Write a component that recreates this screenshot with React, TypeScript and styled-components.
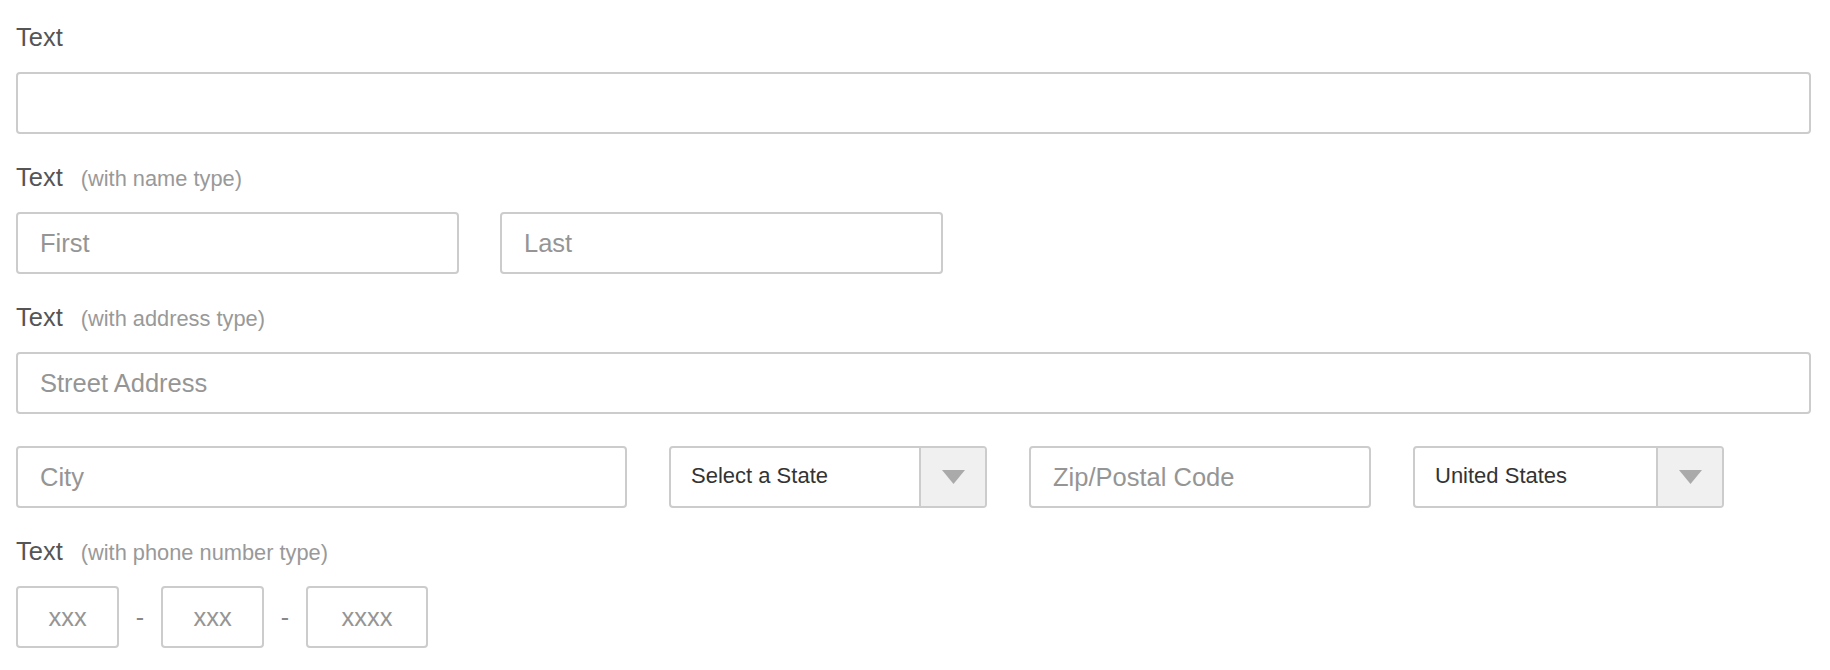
import React from "react";
import styled, { createGlobalStyle } from "styled-components";

const GlobalStyle = createGlobalStyle`
  html, body { margin: 0; padding: 0; background: #fff; }
  body { font-family: "Liberation Sans", Arial, Helvetica, sans-serif; }
  * { box-sizing: border-box; }
`;

const Form = styled.form`
  display: flex;
  flex-direction: column;
  gap: 28px;
  padding: 22px 19px 0 16px;
`;

const Field = styled.div`
  display: flex;
  flex-direction: column;
  gap: 20px;
`;

const LabelRow = styled.div`
  display: flex;
  align-items: baseline;
  gap: 18px;
  height: 30px;
  line-height: 30px;
`;

const MainLabel = styled.label`
  font-size: 25.5px;
  color: #555;
`;

const Hint = styled.span`
  font-size: 21.8px;
  color: #999;
`;

const Stack = styled.div`
  display: flex;
  flex-direction: column;
  gap: 32px;
`;

const Row = styled.div<{ $gap: number }>`
  display: flex;
  align-items: center;
  gap: ${(p) => p.$gap}px;
`;

const TextInput = styled.input<{ $w?: number; $center?: boolean }>`
  height: 62px;
  width: ${(p) => (p.$w ? `${p.$w}px` : "100%")};
  flex: none;
  border: 2px solid #ccc;
  border-radius: 4px;
  padding: 0 ${(p) => (p.$center ? 0 : 22)}px;
  font-family: inherit;
  font-size: 25.5px;
  color: #555;
  background: #fff;
  outline: none;
  text-align: ${(p) => (p.$center ? "center" : "left")};
  &::placeholder {
    color: #959595;
    opacity: 1;
  }
`;

const SelectWrap = styled.div<{ $w: number }>`
  display: flex;
  width: ${(p) => p.$w}px;
  height: 62px;
  flex: none;
  border: 2px solid #ccc;
  border-radius: 4px;
  overflow: hidden;
  background: #fff;
`;

const NativeSelect = styled.select`
  appearance: none;
  -webkit-appearance: none;
  flex: 1;
  min-width: 0;
  height: 100%;
  border: 0;
  padding: 0 0 3px 20px;
  font-family: inherit;
  font-size: 22px;
  color: #333;
  background: transparent;
  outline: none;
`;

const ArrowBox = styled.div`
  width: 66px;
  flex: none;
  display: flex;
  align-items: center;
  justify-content: center;
  background: #f0f0f0;
  border-left: 2px solid #ccc;
  pointer-events: none;
`;

const Dash = styled.span`
  width: 0;
  font-size: 25px;
  color: #888;
  display: flex;
  justify-content: center;
`;

const Triangle = () => (
  <svg width="23" height="14" viewBox="0 0 23 14" aria-hidden="true">
    <polygon points="0,0 23,0 11.5,14" fill="#aaa" />
  </svg>
);

const Select: React.FC<{ width: number; options: string[] }> = ({ width, options }) => (
  <SelectWrap $w={width}>
    <NativeSelect defaultValue={options[0]}>
      {options.map((o) => (
        <option key={o} value={o}>
          {o}
        </option>
      ))}
    </NativeSelect>
    <ArrowBox>
      <Triangle />
    </ArrowBox>
  </SelectWrap>
);

export default function App() {
  return (
    <>
      <GlobalStyle />
      <Form onSubmit={(e) => e.preventDefault()}>
        <Field>
          <LabelRow>
            <MainLabel>Text</MainLabel>
          </LabelRow>
          <TextInput type="text" />
        </Field>

        <Field>
          <LabelRow>
            <MainLabel>Text</MainLabel>
            <Hint>(with name type)</Hint>
          </LabelRow>
          <Row $gap={41}>
            <TextInput $w={443} placeholder="First" />
            <TextInput $w={443} placeholder="Last" />
          </Row>
        </Field>

        <Field>
          <LabelRow>
            <MainLabel>Text</MainLabel>
            <Hint>(with address type)</Hint>
          </LabelRow>
          <Stack>
            <TextInput placeholder="Street Address" />
            <Row $gap={42}>
              <TextInput $w={611} placeholder="City" />
              <Select width={318} options={["Select a State", "Alabama", "Alaska", "Arizona", "California", "New York", "Texas"]} />
              <TextInput $w={342} placeholder="Zip/Postal Code" />
              <Select width={311} options={["United States", "Canada", "Mexico"]} />
            </Row>
          </Stack>
        </Field>

        <Field>
          <LabelRow>
            <MainLabel>Text</MainLabel>
            <Hint>(with phone number type)</Hint>
          </LabelRow>
          <Row $gap={21}>
            <TextInput $w={103} $center placeholder="xxx" />
            <Dash>-</Dash>
            <TextInput $w={103} $center placeholder="xxx" />
            <Dash>-</Dash>
            <TextInput $w={122} $center placeholder="xxxx" />
          </Row>
        </Field>
      </Form>
    </>
  );
}
